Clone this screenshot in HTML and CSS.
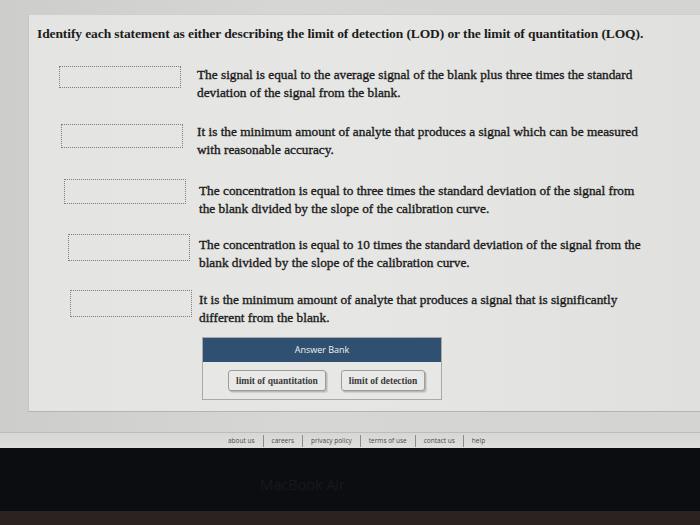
FILE: index.html
```html
<!DOCTYPE html>
<html lang="en">
<head>
<meta charset="utf-8">
<title>LOD vs LOQ</title>
<link rel="stylesheet" href="styles.css">
</head>
<body>
<div class="screen">
  <div class="card">
    <div class="title">Identify each statement as either describing the limit of detection (LOD) or the limit of quantitation (LOQ).</div>
    <div class="rows">
      <div class="row r1"><div class="drop"></div><p class="stmt">The signal is equal to the average signal of the blank plus three times the standard deviation of the signal from the blank.</p></div>
      <div class="row r2"><div class="drop"></div><p class="stmt">It is the minimum amount of analyte that produces a signal which can be measured with reasonable accuracy.</p></div>
      <div class="row r3"><div class="drop"></div><p class="stmt">The concentration is equal to three times the standard deviation of the signal from the blank divided by the slope of the calibration curve.</p></div>
      <div class="row r4"><div class="drop"></div><p class="stmt">The concentration is equal to 10 times the standard deviation of the signal from the blank divided by the slope of the calibration curve.</p></div>
      <div class="row r5"><div class="drop"></div><p class="stmt">It is the minimum amount of analyte that produces a signal that is significantly different from the blank.</p></div>
    </div>
    <div class="bank">
      <div class="bank-head">Answer Bank</div>
      <div class="bank-body">
        <span class="chip">limit of quantitation</span>
        <span class="chip">limit of detection</span>
      </div>
    </div>
  </div>
  <div class="footer">
    <a>about us</a><a>careers</a><a>privacy policy</a><a>terms of use</a><a>contact us</a><a class="last">help</a>
  </div>
</div>
<div class="bezel"><span class="brand">MacBook Air</span></div>
<div class="base"></div>
</body>
</html>
```

FILE: styles.css
```css
html, body {
  margin: 0;
  padding: 0;
}
body {
  width: 700px;
  height: 525px;
  overflow: hidden;
  background: #d2d2d0;
  font-family: "Liberation Serif", "Times New Roman", serif;
}
.screen {
  height: 448px;
  display: flex;
  flex-direction: column;
  background: linear-gradient(90deg, #cdcdcb 0%, #d6d6d4 40%, #d4d4d2 100%);
}
.card {
  margin-top: 14px;
  margin-left: 28px;
  height: 398px;
  box-sizing: border-box;
  background: linear-gradient(90deg, #e4e4e2 0%, #e6e6e4 50%, #e0e0de 100%);
  border-left: 1px solid #c6c6c4;
  border-top: 1px solid #cfcfcd;
  border-bottom: 1px solid #b4b4b2;
  padding: 11px 0 0 8px;
}
.title {
  font-size: 13.5px;
  font-weight: bold;
  color: #1c1c1c;
  white-space: nowrap;
  letter-spacing: -0.1px;
}
.rows {
  margin-top: 24px;
  display: flex;
  flex-direction: column;
  gap: 21px;
}
.row {
  display: flex;
  align-items: flex-start;
}
.drop {
  flex: none;
  width: 122px;
  height: 22px;
  margin-left: 22px;
  margin-right: 16px;
  margin-top: 0;
  border: 1px dotted #7e7e7e;
  box-sizing: border-box;
}
.r2 .drop { margin-left: 24px; margin-right: 14px; height: 24px; margin-top: 1px; }
.r3 .drop { margin-left: 27px; margin-right: 11px; height: 25px; margin-top: -3px; }
.r4 .drop { margin-left: 31px; margin-right: 7px; height: 27px; margin-top: -2px; }
.r5 .drop { margin-left: 33px; margin-right: 5px; height: 27px; margin-top: -1px; }
.r3 .stmt, .r4 .stmt, .r5 .stmt { margin-left: 2px; }
.r3 { margin-top: 2px; }
.r4 { margin-top: -3px; }
.r5 { margin-top: -2px; }
.stmt {
  margin: 0;
  width: 446px;
  font-size: 13.3px;
  line-height: 18px;
  color: #1a1a1a;
  font-weight: normal;
  -webkit-text-stroke: 0.35px #1a1a1a;
}
.bank {
  margin-top: 10px;
  margin-left: 165px;
  width: 240px;
  border: 1px solid #a9a9a9;
  box-sizing: border-box;
}
.bank-head {
  height: 24px;
  background: #2f5070;
  color: #f2f2f2;
  font-family: "Open Sans", "Liberation Sans", sans-serif;
  font-size: 9px;
  line-height: 24px;
  text-align: center;
}
.bank-body {
  height: 37px;
  background: #e7e7e5;
  display: flex;
  align-items: center;
  padding-left: 25px;
  gap: 15px;
}
.chip {
  display: inline-block;
  height: 21px;
  line-height: 20px;
  padding: 0 7px;
  box-sizing: border-box;
  border: 1px solid #9c9c9c;
  border-radius: 3px;
  background: #e9e9e7;
  box-shadow: 1px 1px 0 #b8b8b6, 2px 2px 0 #d0d0ce;
  font-size: 9.5px;
  font-weight: bold;
  color: #3a3a3a;
}
.footer {
  margin-top: auto;
  height: 16px;
  border-top: 1px solid #bdbdbb;
  background: linear-gradient(180deg, #d7d7d5, #dededc);
  display: flex;
  align-items: center;
  padding-left: 228px;
  box-sizing: border-box;
}
.footer a {
  font-family: "Open Sans", "Liberation Sans", sans-serif;
  font-size: 6.5px;
  color: #4a4a4a;
  padding: 0 8px 0 0;
  margin-right: 8px;
  border-right: 1px solid #8c8c8c;
  line-height: 12px;
}
.footer a.last {
  border-right: none;
}
.bezel {
  height: 63px;
  background: #0c0d11;
  position: relative;
}
.brand {
  position: absolute;
  left: 260px;
  top: 26px;
  font-family: "Open Sans", "Liberation Sans", sans-serif;
  font-size: 15px;
  color: #17181c;
  letter-spacing: -0.3px;
}
.base {
  height: 14px;
  background: #2a2320;
}
```
